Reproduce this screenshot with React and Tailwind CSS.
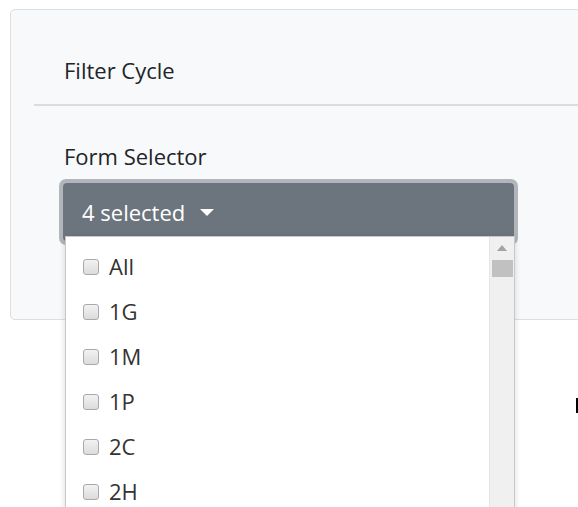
import React from "react";

const items = ["All", "1G", "1M", "1P", "2C", "2H"];

function Checkbox() {
  return (
    <span className="inline-block w-[16px] h-[16px] rounded-[3px] border border-[#a9a9a9] bg-gradient-to-b from-[#f2f2f2] to-[#dcdcdc] shrink-0" />
  );
}

export default function App() {
  return (
    <div
      className="relative w-[578px] h-[507px] overflow-hidden bg-white"
      style={{ fontFamily: '"Segoe UI", "Open Sans", "Noto Sans", sans-serif' }}
    >
      <div className="ml-[10px] mt-[9px] w-[620px] h-[311px] rounded-[5px] border border-[#dcdee0] bg-[#f8f9fa] px-[23px]">
        <div className="h-[96px] border-b-2 border-[#dadde0] pl-[30px] pt-[45px] text-[22px] leading-[30px] text-[#212529]">
          Filter Cycle
        </div>
        <div className="pl-[25px] pt-[35px]">
          <div className="pl-[5px] text-[22px] leading-[30px] text-[#212529]">Form Selector</div>
          <div className="mt-[8px] w-[459px] rounded-[7px] bg-[#b1b6bb] p-[4px]">
            <div className="flex h-[58px] items-center gap-[15px] rounded-[4px] bg-[#6c757d] pl-[19px] text-[22px] text-white">
              <span>4 selected</span>
              <span className="mt-[1px] h-0 w-0 border-x-[7px] border-t-[7px] border-x-transparent border-t-white" />
            </div>
          </div>
        </div>
      </div>

      <div className="absolute left-[65px] top-[236px] h-[300px] w-[450px] border border-[#c8c8c8] bg-white shadow-[0_2px_6px_rgba(0,0,0,0.15)]">
        <div className="flex h-full">
          <div className="flex-1 pl-[17px] pt-[7px]">
            {items.map((it) => (
              <div key={it} className="flex h-[45px] items-center gap-[10px] text-[22px] text-[#333]">
                <Checkbox />
                <span>{it}</span>
              </div>
            ))}
          </div>
          <div className="relative w-[25px] bg-[#f0f0f0] border-l border-[#e6e6e6]">
            <span className="absolute left-[7px] top-[8px] h-0 w-0 border-x-[5px] border-b-[6px] border-x-transparent border-b-[#a3a3a3]" />
            <span className="absolute left-[2px] top-[23px] h-[17px] w-[21px] bg-[#c1c1c1]" />
          </div>
        </div>
      </div>

      <div className="absolute left-[576px] top-[398px] h-[15px] w-[2px] bg-black" />
    </div>
  );
}
